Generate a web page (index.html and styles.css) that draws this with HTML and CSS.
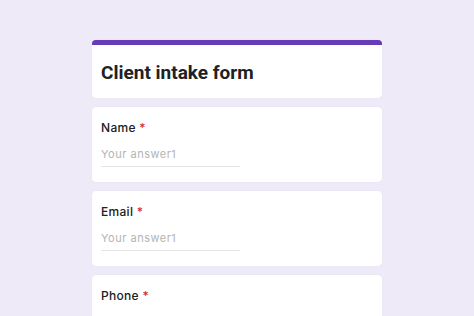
FILE: index.html
```html
<html>
<head>
    <meta charset="UTF-8">
    <meta name="viewport" content="width=device-width, initial-scale=1.0">
    <title>Client intake form</title>
    <link rel="stylesheet" href="styles.css">
</head>
<body>
<div class="container">
    <div class="card header-card">
        <h1>Client intake form</h1>
    </div>
    <div class="card question">
        <label for="name">Name <span class="required">*</span></label>
        <input type="text" id="name" placeholder="Your answer1">
    </div>
    <div class="card question">
        <label for="email">Email <span class="required">*</span></label>
        <input type="text" id="email" placeholder="Your answer1">
    </div>
    <div class="card question">
        <label for="phone">Phone <span class="required">*</span></label>
        <input type="text" id="phone" placeholder="Your answer1">
    </div>
</div>
</body>
</html>
```

FILE: styles.css
```css
body {
    font-family: Inter, "Open Sans", Arial, sans-serif;
    background-color: #eeeaf8;
    margin: 0;
    padding: 0;
}

.container {
    width: 290px;
    margin-left: 92px;
    padding-top: 40px;
    display: flex;
    flex-direction: column;
    gap: 9px;
}

.card {
    background-color: #fff;
    border-radius: 4px;
    box-shadow: 0 0 1px rgba(0, 0, 0, 0.12);
}

.header-card {
    border-top: 5px solid #673ab7;
    height: 53px;
    padding: 0 9px;
    display: flex;
    align-items: center;
}

h1 {
    font-family: Roboto, Arial, sans-serif;
    font-size: 19px;
    font-weight: bold;
    color: #202124;
    margin: 0;
    padding-top: 1px;
}

.question {
    height: 75px;
    box-sizing: border-box;
    padding: 13px 9px 0 9px;
    display: flex;
    flex-direction: column;
}

.question label {
    font-size: 12px;
    font-weight: 500;
    color: #202124;
    letter-spacing: 0.3px;
}

.required {
    color: #d93025;
}

.question input {
    width: 139px;
    margin-top: 12px;
    padding: 0 0 5px 0;
    border: none;
    border-bottom: 1px solid #e4e4e4;
    font-family: Inter, "Open Sans", Arial, sans-serif;
    font-size: 11px;
    letter-spacing: 0.5px;
    outline: none;
}

.question input::placeholder {
    color: #b4b4b4;
}
```
